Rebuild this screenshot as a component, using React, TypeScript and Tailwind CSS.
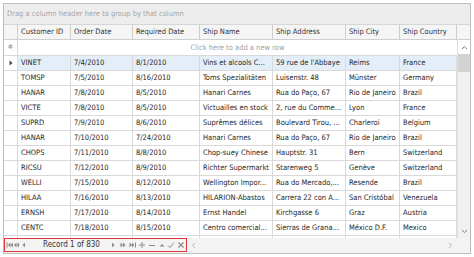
import React from "react";

type Row = [string, string, string, string, string, string, string];

const rows: Row[] = [
  ["VINET", "7/4/2010", "8/1/2010", "Vins et alcools C...", "59 rue de l'Abbaye", "Reims", "France"],
  ["TOMSP", "7/5/2010", "8/16/2010", "Toms Spezialitäten", "Luisenstr. 48", "Münster", "Germany"],
  ["HANAR", "7/8/2010", "8/5/2010", "Hanari Carnes", "Rua do Paço, 67", "Rio de Janeiro", "Brazil"],
  ["VICTE", "7/8/2010", "8/5/2010", "Victuailles en stock", "2, rue du Comme...", "Lyon", "France"],
  ["SUPRD", "7/9/2010", "8/6/2010", "Suprêmes délices", "Boulevard Tirou, ...", "Charleroi", "Belgium"],
  ["HANAR", "7/10/2010", "7/24/2010", "Hanari Carnes", "Rua do Paço, 67", "Rio de Janeiro", "Brazil"],
  ["CHOPS", "7/11/2010", "8/8/2010", "Chop-suey Chinese", "Hauptstr. 31", "Bern", "Switzerland"],
  ["RICSU", "7/12/2010", "8/9/2010", "Richter Supermarkt", "Starenweg 5", "Genève", "Switzerland"],
  ["WELLI", "7/15/2010", "8/12/2010", "Wellington Impor...", "Rua do Mercado,...", "Resende", "Brazil"],
  ["HILAA", "7/16/2010", "8/13/2010", "HILARION-Abastos", "Carrera 22 con A...", "San Cristóbal", "Venezuela"],
  ["ERNSH", "7/17/2010", "8/14/2010", "Ernst Handel", "Kirchgasse 6", "Graz", "Austria"],
  ["CENTC", "7/18/2010", "8/15/2010", "Centro comercial...", "Sierras de Grana...", "México D.F.", "Mexico"],
  ["", "", "", "", "", "", ""],
];

const headers = ["Customer ID", "Order Date", "Required Date", "Ship Name", "Ship Address", "Ship City", "Ship Country"];
const widths = ["w-[53px]", "w-[62px]", "w-[67px]", "w-[73px]", "w-[73px]", "w-[54px]", "w-[57px]"];

const G = "#8c8c8c";

function Icon({ children, w = 8 }: { children: React.ReactNode; w?: number }) {
  return (
    <svg width={w} height="8" viewBox={`0 0 ${w} 8`} className="shrink-0">
      {children}
    </svg>
  );
}

export default function App() {
  return (
    <div
      className="w-[474px] h-[257px] bg-white pt-[3px] pl-[3px] overflow-hidden text-[7.5px] leading-none font-stretch-condensed"
      style={{ fontFamily: '"DejaVu Sans Condensed", "DejaVu Sans", "Liberation Sans", sans-serif' }}
    >
      <div className="w-[468px] h-[251px] border border-[#bdbdbd] flex flex-col overflow-hidden">
        {/* group panel */}
        <div className="h-[20px] shrink-0 bg-[#ededed] flex items-center pl-[3px] text-[#a6a6a6]">
          Drag a column header here to group by that column
        </div>
        {/* header */}
        <div className="h-[16px] shrink-0 flex bg-[#f5f5f5] text-[#333333] border-t border-[#d6d6d6]">
          <div className="w-[14px] h-full border-r border-b border-[#cfcfcf]" />
          {headers.map((h, i) => (
            <div
              key={h}
              className={`${widths[i]} h-full border-r border-b border-[#cfcfcf] flex items-center pl-[3px] whitespace-nowrap overflow-hidden`}
            >
              {h}
            </div>
          ))}
          <div className="flex-1 h-full border-b border-[#cfcfcf]" />
        </div>
        {/* body */}
        <div className="flex h-[198px] shrink-0 overflow-hidden">
          <div className="w-[453px] flex flex-col overflow-hidden">
            {/* new row */}
            <div className="h-[16px] shrink-0 flex border-b border-[#d9d9d9]">
              <div className="w-[14px] h-full border-r border-[#d9d9d9] flex items-center justify-center text-[#b0b0b0] text-[7px]">
                ✱
              </div>
              <div className="flex-1 h-full flex items-center justify-center text-[#a0a0a0]">
                Click here to add a new row
              </div>
            </div>
            {rows.map((r, ri) => (
              <div
                key={ri}
                className={`h-[15px] shrink-0 flex text-[#262626] ${ri === 0 ? "bg-[#e3eef9]" : "bg-white"}`}
              >
                <div className="w-[14px] h-full bg-white border-r border-b border-[#d9d9d9] flex items-center justify-center">
                  {ri === 0 && (
                    <svg width="4" height="6" viewBox="0 0 4 6">
                      <path d="M0.5 0.5 L3.5 3 L0.5 5.5 Z" fill="#444" />
                    </svg>
                  )}
                </div>
                {r.map((c, ci) => (
                  <div
                    key={ci}
                    className={`${widths[ci]} h-full border-r border-b border-[#d9d9d9] flex items-center pl-[3px] whitespace-nowrap overflow-hidden`}
                  >
                    {c}
                  </div>
                ))}
              </div>
            ))}
          </div>
          {/* vertical scrollbar */}
          <div className="flex-1 bg-[#f1f1f1] border-l border-[#e2e2e2] flex flex-col items-center">
            <div className="h-[14px] w-full flex items-center justify-center bg-white">
              <svg width="7" height="5" viewBox="0 0 7 5">
                <path d="M1 4 L3.5 1.5 L6 4" stroke="#7a7a7a" strokeWidth="1" fill="none" />
              </svg>
            </div>
            <div className="w-full h-[18px] bg-[#d2d2d2]" />
            <div className="flex-1" />
            <div className="h-[14px] w-full flex items-center justify-center">
              <svg width="7" height="5" viewBox="0 0 7 5">
                <path d="M1 1 L3.5 3.5 L6 1" stroke="#7a7a7a" strokeWidth="1" fill="none" />
              </svg>
            </div>
          </div>
        </div>
        {/* bottom bar */}
        <div className="h-[15px] shrink-0 flex bg-[#f3f3f3]">
          <div className="w-[183px] h-[14px] border border-[#e0353c] flex items-center pl-[1px] text-[#333333]">
            <div className="flex items-center">
              <Icon w={7}>
                <rect x="0.5" y="1.5" width="1" height="5" fill={G} />
                <path d="M4.5 1.5 L2 4 L4.5 6.5 Z" fill={G} />
                <path d="M7 1.5 L4.5 4 L7 6.5 Z" fill={G} />
              </Icon>
              <Icon w={7}>
                <path d="M3.5 1.5 L1 4 L3.5 6.5 Z" fill={G} />
                <path d="M6 1.5 L3.5 4 L6 6.5 Z" fill={G} />
              </Icon>
              <Icon w={7}>
                <path d="M5 1.5 L2.5 4 L5 6.5 Z" fill={G} />
              </Icon>
            </div>
            <span className="ml-[16px] whitespace-nowrap text-[8px]">Record 1 of 830</span>
            <div className="ml-auto mr-[1px] flex items-center gap-[1.7px]">
              <Icon>
                <path d="M3 1.5 L5.5 4 L3 6.5 Z" fill={G} />
              </Icon>
              <Icon>
                <path d="M1.5 1.5 L4 4 L1.5 6.5 Z" fill={G} />
                <path d="M4 1.5 L6.5 4 L4 6.5 Z" fill={G} />
              </Icon>
              <Icon>
                <path d="M0.5 1.5 L3 4 L0.5 6.5 Z" fill={G} />
                <path d="M3 1.5 L5.5 4 L3 6.5 Z" fill={G} />
                <rect x="6" y="1.5" width="1" height="5" fill={G} />
              </Icon>
              <Icon>
                <path d="M4 1 V7 M1 4 H7" stroke={G} strokeWidth="1" />
              </Icon>
              <Icon>
                <path d="M1 4.5 H7" stroke={G} strokeWidth="1" />
              </Icon>
              <Icon>
                <path d="M1.5 5.5 L4 3 L6.5 5.5 Z" fill={G} />
              </Icon>
              <Icon>
                <path d="M1 4.5 L3 6.5 L7 1.5" stroke={G} strokeWidth="1" fill="none" />
              </Icon>
              <Icon>
                <path d="M1.5 1.5 L6.5 6.5 M6.5 1.5 L1.5 6.5" stroke={G} strokeWidth="1.2" />
              </Icon>
            </div>
          </div>
          <div className="flex-1 h-[14px] flex items-center justify-between px-[4px]">
            <svg width="5" height="7" viewBox="0 0 5 7">
              <path d="M4 1 L1.5 3.5 L4 6" stroke="#b5b5b5" strokeWidth="1" fill="none" />
            </svg>
            <svg width="5" height="7" viewBox="0 0 5 7">
              <path d="M1 1 L3.5 3.5 L1 6" stroke="#b5b5b5" strokeWidth="1" fill="none" />
            </svg>
          </div>
          <div className="w-[13px] h-[14px]" />
        </div>
      </div>
    </div>
  );
}
